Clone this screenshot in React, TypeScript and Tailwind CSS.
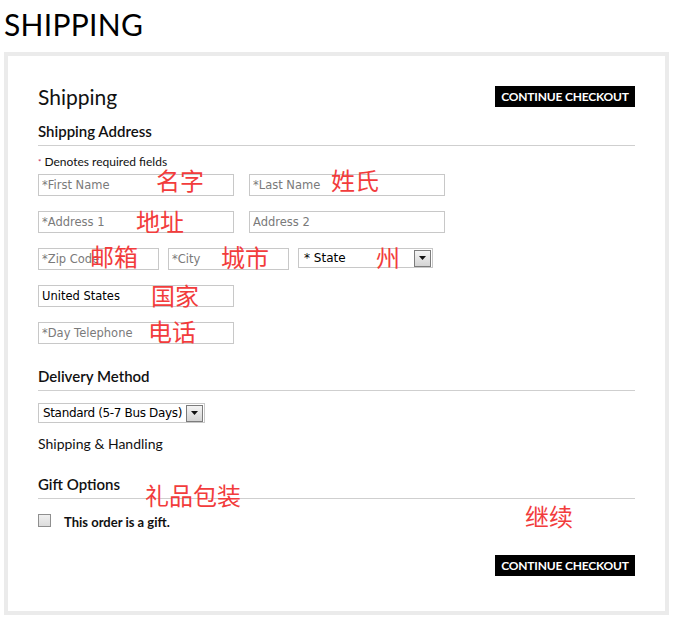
import type { ReactNode } from "react";

const head = { fontFamily: "Lato, 'Open Sans', sans-serif" };
const field = { fontFamily: "'DejaVu Sans', Verdana, sans-serif" };
const cjk = { fontFamily: "'Noto Sans CJK SC', sans-serif" };

const Note = ({ children, className }: { children: ReactNode; className: string }) => (
  <span style={cjk} className={`absolute text-[24px] leading-none text-[#f23c3c] ${className}`}>
    {children}
  </span>
);

const Field = ({ ph, value, w }: { ph?: string; value?: string; w: string }) => (
  <input
    readOnly
    style={field}
    placeholder={ph}
    defaultValue={value}
    className={`block h-[22px] ${w} border border-[#c8c8c8] bg-white px-[3px] text-[11.5px] text-black outline-none placeholder:text-[#7a7a7a]`}
  />
);

const Arrow = () => (
  <span className="flex h-[17px] w-[17px] shrink-0 items-center justify-center border border-[#7c7c7c] bg-gradient-to-b from-[#f4f4f4] to-[#d4d4d4]">
    <svg width="7" height="4" viewBox="0 0 7 4">
      <path d="M0 0h7L3.5 4z" fill="#111" />
    </svg>
  </span>
);

const Button = () => (
  <button
    style={head}
    className="block h-[21px] w-[140px] bg-black text-[12px] leading-[21px] font-bold tracking-[-0.2px] text-white"
  >
    CONTINUE CHECKOUT
  </button>
);

const Section = ({ title }: { title: string }) => (
  <div
    style={head}
    className="border-b border-[#cfcfcf] pb-[5px] text-[15px] leading-[18px] font-semibold text-[#111]"
  >
    {title}
  </div>
);

export default function App() {
  return (
    <div className="h-[620px] w-[676px] bg-white">
      <h1 style={head} className="px-[4px] pt-[4px] text-[30px] leading-[40px] tracking-[0.3px] text-black">
        SHIPPING
      </h1>
      <div className="ml-[4px] mt-[8px] h-[563px] w-[665px] border-[4px] border-[#ebebeb] px-[30px] pt-[30px]">
        <div className="flex h-[21px] items-center justify-between">
          <span style={head} className="text-[21px] leading-[21px] text-[#111]">Shipping</span>
          <Button />
        </div>
        <div className="mt-[15px]">
          <Section title="Shipping Address" />
        </div>
        <div style={head} className="mt-[9px] h-[14px] text-[12px] leading-[14px] text-[#111]">
          <span className="align-top text-[8px] text-[#c2185b]">*</span> Denotes required fields
        </div>

        <div className="relative mt-[5px] flex gap-[15px]">
          <Field ph="*First Name" w="w-[196px]" />
          <Field ph="*Last Name" w="w-[196px]" />
          <Note className="left-[118px] top-[-6px]">名字</Note>
          <Note className="left-[293px] top-[-6px]">姓氏</Note>
        </div>
        <div className="relative mt-[15px] flex gap-[15px]">
          <Field ph="*Address 1" w="w-[196px]" />
          <Field ph="Address 2" w="w-[196px]" />
          <Note className="left-[98px] top-[-2px]">地址</Note>
        </div>
        <div className="relative mt-[15px] flex h-[22px] items-start gap-[9px]">
          <Field ph="*Zip Code" w="w-[121px]" />
          <Field ph="*City" w="w-[121px]" />
          <div
            style={field}
            className="flex h-[20px] w-[135px] items-center justify-between border border-[#c8c8c8] bg-white pl-[5px] pr-[1px] text-[12px] text-black"
          >
            <span>* State</span>
            <Arrow />
          </div>
          <Note className="left-[52px] top-[-4px]">邮箱</Note>
          <Note className="left-[183px] top-[-3px]">城市</Note>
          <Note className="left-[338px] top-[-3px]">州</Note>
        </div>
        <div className="relative mt-[15px] flex">
          <Field value="United States" w="w-[196px]" />
          <Note className="left-[113px] top-[-2px]">国家</Note>
        </div>
        <div className="relative mt-[15px] flex">
          <Field ph="*Day Telephone" w="w-[196px]" />
          <Note className="left-[110px] top-[-3px]">电话</Note>
        </div>

        <div className="mt-[23px]">
          <Section title="Delivery Method" />
        </div>
        <div
          style={field}
          className="mt-[12px] flex h-[20px] w-[167px] items-center justify-between border border-[#c8c8c8] bg-white pl-[4px] pr-[1px] text-[12px] tracking-[-0.35px] whitespace-nowrap text-black"
        >
          <span>Standard (5-7 Bus Days)</span>
          <Arrow />
        </div>
        <div style={head} className="mt-[12px] text-[14px] leading-[18px] text-[#111]">
          Shipping &amp; Handling
        </div>

        <div className="relative mt-[22px]">
          <Section title="Gift Options" />
          <Note className="left-[107px] top-[8px]">礼品包装</Note>
          <Note className="left-[487px] top-[29px]">继续</Note>
        </div>
        <div className="mt-[15px] flex h-[13px] items-center gap-[13px]">
          <span className="h-[13px] w-[13px] border border-[#8f8f8f] bg-gradient-to-b from-[#f0f0f0] to-[#dcdcdc]" />
          <span style={head} className="mt-[3px] text-[13px] leading-[13px] font-bold text-[#111]">
            This order is a gift.
          </span>
        </div>
        <div className="mt-[28px] flex justify-end">
          <Button />
        </div>
      </div>
    </div>
  );
}
